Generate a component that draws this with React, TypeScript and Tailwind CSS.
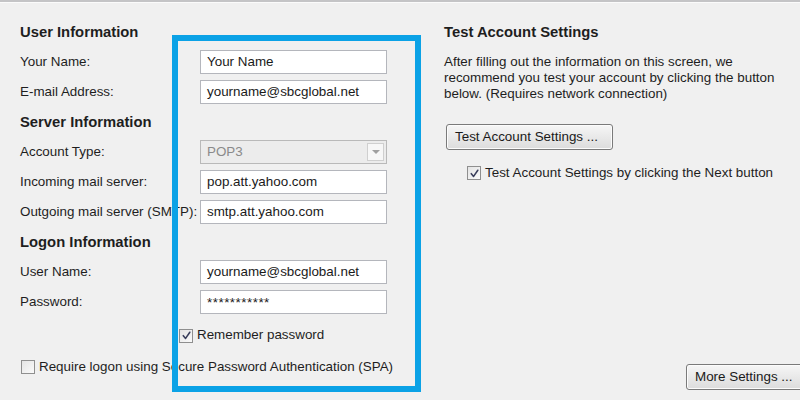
import type { ReactNode } from 'react';

function TextBox({ value, className = '' }: { value: string; className?: string }) {
    return (
        <div className={`h-[24px] w-[187px] bg-white border border-[#b4b6bc] flex items-center px-[6px] text-[#1a1a1a] ${className}`}>
            {value}
        </div>
    );
}

function CheckBox({ checked }: { checked: boolean }) {
    return (
        <span className="inline-flex h-[14px] w-[14px] shrink-0 items-center justify-center border border-[#8f8f8f] bg-gradient-to-br from-[#e4e4e4] to-[#fafafa]">
            {checked && (
                <svg viewBox="0 0 12 12" className="h-[11px] w-[11px]">
                    <path d="M2.5 6.2 L5 9.2 L9.6 2.4" fill="none" stroke="#3a3f5c" strokeWidth="1.7" strokeLinecap="round" strokeLinejoin="round" />
                </svg>
            )}
        </span>
    );
}

function Button({ children, className = '' }: { children: ReactNode; className?: string }) {
    return (
        <div className={`h-[26px] flex items-center rounded-[3px] border border-[#7a7a7a] bg-gradient-to-b from-[#f6f6f6] to-[#dcdcdc] px-[8px] text-[#1a1a1a] shadow-[inset_0_0_0_1px_#fcfcfc] ${className}`}>
            {children}
        </div>
    );
}

function Row({ label, children }: { label?: string; children?: ReactNode }) {
    return (
        <div className="h-[30px] flex items-center">
            <span className="w-[180px] shrink-0 whitespace-nowrap">{label}</span>
            {children}
        </div>
    );
}

function Heading({ children }: { children: ReactNode }) {
    return <div className="h-[30px] flex items-center font-bold text-[14.8px]">{children}</div>;
}

export default function App() {
    return (
        <div
            className="relative w-[800px] h-[400px] overflow-hidden bg-[#f0f0f0] text-[13.4px] text-[#1e1e1e]"
            style={{ fontFamily: '"Liberation Sans", Arial, sans-serif' }}
        >
            <div className="h-[2px] bg-[#c4c4c6]" />
            <div className="h-[1px] bg-[#fbfbfb]" />

            <div className="flex h-[397px]">
                {/* account fields */}
                <div className="w-[444px] shrink-0 pl-[20px] pt-[14px]">
                    <Heading>User Information</Heading>
                    <Row label="Your Name:">
                        <TextBox value="Your Name" />
                    </Row>
                    <Row label="E-mail Address:">
                        <TextBox value="yourname@sbcglobal.net" />
                    </Row>
                    <Heading>Server Information</Heading>
                    <Row label="Account Type:">
                        <div className="h-[24px] w-[187px] flex items-center border border-[#b9b9b9] bg-[#ececec] pl-[6px] pr-[2px] text-[#8a8a8a]">
                            <span className="flex-1">POP3</span>
                            <span className="h-[18px] w-[17px] flex items-center justify-center border border-[#cfcfcf] bg-[#f7f7f7]">
                                <svg viewBox="0 0 8 4" className="h-[4px] w-[8px]">
                                    <path d="M0 0 L8 0 L4 4 Z" fill="#a0a0a0" />
                                </svg>
                            </span>
                        </div>
                    </Row>
                    <Row label="Incoming mail server:">
                        <TextBox value="pop.att.yahoo.com" />
                    </Row>
                    <Row label="Outgoing mail server (SMTP):">
                        <TextBox value="smtp.att.yahoo.com" />
                    </Row>
                    <Heading>Logon Information</Heading>
                    <Row label="User Name:">
                        <TextBox value="yourname@sbcglobal.net" />
                    </Row>
                    <Row label="Password:">
                        <TextBox value="***********" className="tracking-[0.5px] pt-[3px]" />
                    </Row>
                    <div className="h-[35px] flex items-center gap-[4px] pl-[159px] pt-[2px]">
                        <CheckBox checked />
                        <span>Remember password</span>
                    </div>
                    <div className="h-[30px] flex items-center gap-[4px] pl-[1px]">
                        <CheckBox checked={false} />
                        <span>Require logon using Secure Password Authentication (SPA)</span>
                    </div>
                </div>

                {/* test settings */}
                <div className="flex-1 flex flex-col pt-[14px] pb-[10px]">
                    <Heading>Test Account Settings</Heading>
                    <p className="mt-[7px] leading-[16px] w-[350px]">
                        After filling out the information on this screen, we recommend you test your account by clicking the button below. (Requires network connection)
                    </p>
                    <Button className="mt-[22px] ml-[2px] w-[167px]">Test Account Settings ...</Button>
                    <div className="mt-[13px] ml-[23px] flex items-center gap-[4px]">
                        <CheckBox checked />
                        <span>Test Account Settings by clicking the Next button</span>
                    </div>
                    <Button className="mt-auto ml-[242px] w-[122px] shrink-0">More Settings ...</Button>
                </div>
            </div>

            {/* highlight frame */}
            <div className="absolute left-[172px] top-[35px] w-[249px] h-[357px] border-[6px] border-[#0ba2e6]" />
        </div>
    );
}
